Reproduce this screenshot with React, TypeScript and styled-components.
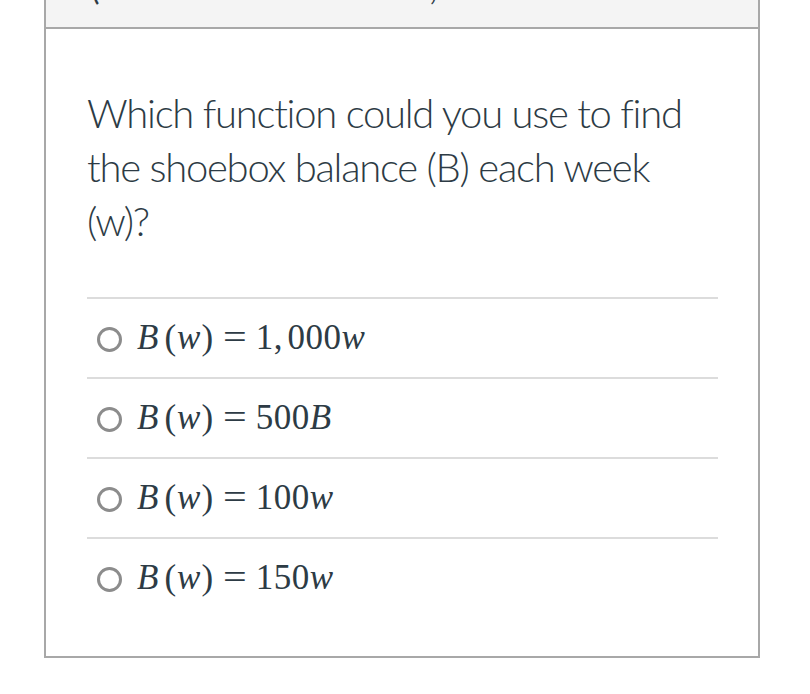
import React from 'react';
import styled, { createGlobalStyle } from 'styled-components';

const GlobalStyle = createGlobalStyle`
  html, body {
    margin: 0;
    padding: 0;
    background: #ffffff;
  }
  body {
    font-family: Lato, "Open Sans", sans-serif;
    color: #2d3b45;
  }
`;

const Page = styled.div`
  width: 810px;
  height: 694px;
  padding-left: 44px;
  box-sizing: border-box;
  overflow: hidden;
`;

const Card = styled.div`
  width: 716px;
  box-sizing: border-box;
  border: 2px solid #a8a8a8;
  border-top: none;
  background: #ffffff;
`;

const CardHeader = styled.div`
  height: 27px;
  background: #f4f4f4;
  border-bottom: 2px solid #a8a8a8;
  overflow: hidden;
  display: flex;
  padding-left: 41px;
`;

const HeaderGlyph = styled.span<{ offset: number }>`
  font-family: Lato, sans-serif;
  font-size: 32px;
  line-height: 32px;
  margin-top: -28px;
  margin-left: ${({ offset }) => offset}px;
  color: #2d3b45;
`;

const CardBody = styled.div`
  padding: 57px 40px 39px 41px;
`;

const Question = styled.p`
  margin: 0 0 49px;
  font-size: 40px;
  font-weight: 300;
  letter-spacing: -1.25px;
  line-height: 54px;
  color: #2d3b45;
`;

const OptionList = styled.div`
  display: flex;
  flex-direction: column;
`;

const Option = styled.label`
  display: flex;
  align-items: center;
  height: 78px;
  border-top: 2px solid #dcdcdc;
  padding-left: 10px;
  cursor: pointer;
`;

const Radio = styled.span`
  width: 25px;
  height: 25px;
  box-sizing: border-box;
  border: 3px solid #8c8c8c;
  border-radius: 50%;
  flex: none;
  margin-right: 15px;
  margin-top: 2px;
`;

const Formula = styled.span`
  font-family: "Liberation Serif", "Times New Roman", serif;
  font-size: 35px;
  color: #2d3b45;
  display: inline-flex;
  align-items: baseline;
  white-space: nowrap;
`;

const Var = styled.i<{ gap?: number }>`
  font-style: italic;
  margin-right: ${({ gap }) => gap ?? 0}px;
`;

const Paren = styled.span`
  margin: 0 1px;
`;

const Rel = styled.span`
  margin: 0 11px;
  transform: scaleX(1.2);
  display: inline-block;
`;

const Num = styled.span`
  letter-spacing: 0.5px;
`;

const Comma = styled.span`
  margin-right: 5px;
`;

type Choice = { lead?: string; num: string; tail: string };

const choices: Choice[] = [
  { lead: '1', num: '000', tail: 'w' },
  { num: '500', tail: 'B' },
  { num: '100', tail: 'w' },
  { num: '150', tail: 'w' },
];

const App = () => (
  <>
    <GlobalStyle />
    <Page>
      <Card>
        <CardHeader>
          <HeaderGlyph offset={4}>(</HeaderGlyph>
          <HeaderGlyph offset={330}>,</HeaderGlyph>
        </CardHeader>
        <CardBody>
          <Question>
            Which function could you use to find the shoebox balance (B) each
            week (w)?
          </Question>
          <OptionList>
            {choices.map((c) => (
              <Option key={(c.lead ?? '') + c.num + c.tail}>
                <Radio />
                <Formula>
                  <Var gap={5}>B</Var>
                  <Paren>(</Paren>
                  <Var>w</Var>
                  <Paren>)</Paren>
                  <Rel>=</Rel>
                  {c.lead && (
                    <>
                      <Num>{c.lead}</Num>
                      <Comma>,</Comma>
                    </>
                  )}
                  <Num>{c.num}</Num>
                  <Var>{c.tail}</Var>
                </Formula>
              </Option>
            ))}
          </OptionList>
        </CardBody>
      </Card>
    </Page>
  </>
);

export default App;
